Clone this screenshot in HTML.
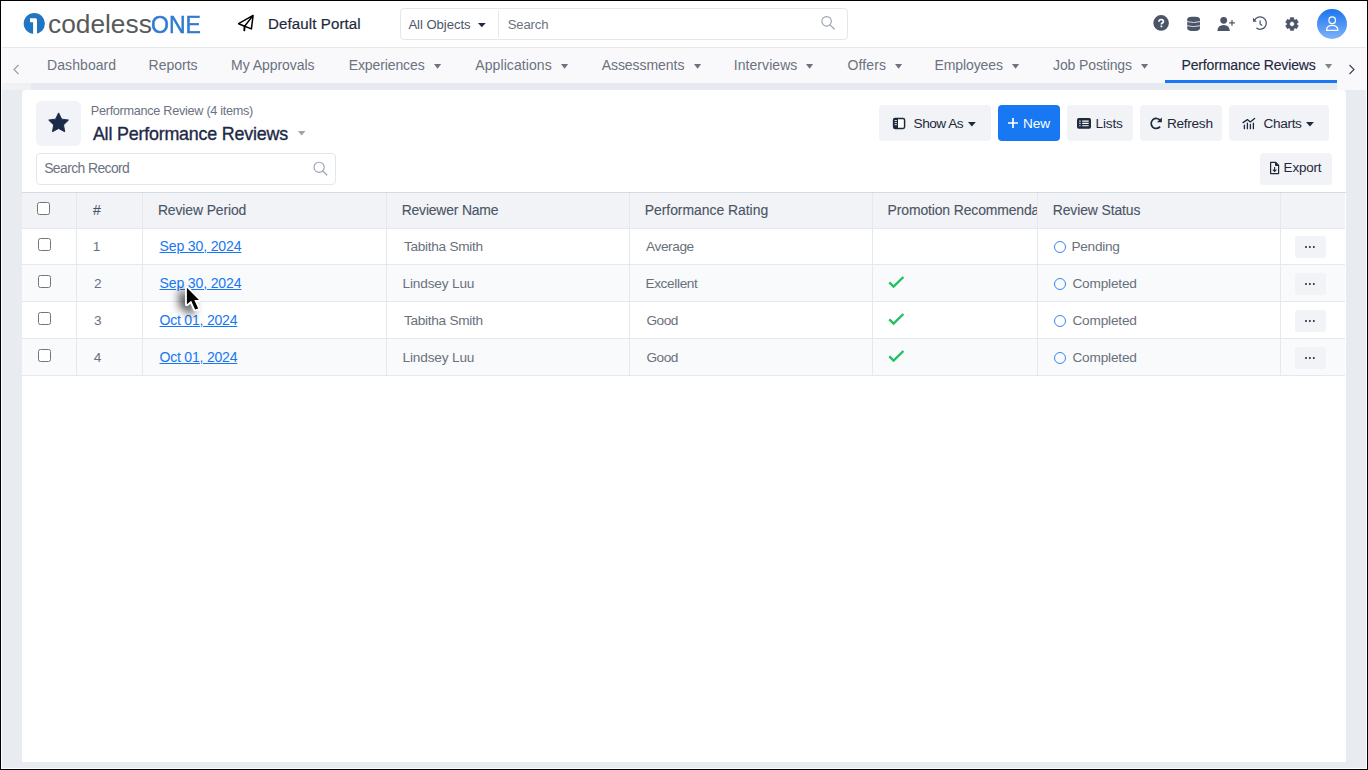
<!DOCTYPE html>
<html><head><meta charset="utf-8">
<style>
*{box-sizing:border-box;margin:0;padding:0}
html,body{width:1368px;height:770px;overflow:hidden;background:#000}
body{font-family:"Liberation Sans",sans-serif;position:relative}
.a{position:absolute;white-space:nowrap;line-height:1}
.r{position:absolute}
.nv{color:#6b7280;font-size:13.7px}
.car{position:absolute;width:0;height:0;border-left:3.6px solid transparent;border-right:3.6px solid transparent;border-top:4.9px solid #6b7280}
.btn{position:absolute;top:105px;height:36px;background:#f1f3f7;border-radius:4px}
.bt{color:#1e293b;font-size:13.1px}
.th{color:#4b5565;font-size:13.5px;-webkit-text-stroke:0.25px #4b5565}
.td{color:#5f6673;font-size:13px}

.cb{position:absolute;width:13px;height:13px;border:1px solid #767676;border-radius:2.5px;background:#fff}
.hl{position:absolute;height:1px;background:#e5e8ec}
.vl{position:absolute;width:1px;background:#e5e8ec}
.more{position:absolute;left:1295px;width:30.5px;height:22px;background:#f1f3f7;border-radius:3px}
.dots{position:absolute;left:10.35px;top:10.35px;width:2.1px;height:2.1px;border-radius:50%;background:#1e293b;box-shadow:3.9px 0 0 #1e293b,7.8px 0 0 #1e293b}
.st{position:absolute;width:12px;height:12px;border:1.3px solid #3b82f6;border-radius:50%}
</style></head>
<body>
<div class="r" style="left:1px;top:1px;width:1366px;height:768px;background:#fff"></div>
<div class="r" style="left:2px;top:1px;width:1364px;height:767px;background:#e8ebef"></div>
<!-- header -->
<div class="r" style="left:2px;top:1px;width:1364px;height:46px;background:#fff"></div>
<div class="r" style="left:2px;top:47px;width:1364px;height:1px;background:#e5e8ed"></div>

<!-- logo -->
<svg class="r" style="left:23px;top:13px" width="22" height="22" viewBox="0 0 22 22">
<circle cx="11.3" cy="10.6" r="10.6" fill="#2175c1"/>
<path d="M7 5.2 H12.5 Q14 5.2 14 6.8 V21.5 H10.1 V9.3 H7 Z" fill="#fff"/>
</svg>
<div class="a" id="logo1" style="left:48px;top:11px;font-size:26.3px;color:#58595b">codeless</div>
<div class="a" id="logo2" style="left:150.8px;top:12.8px;font-size:24.5px;color:#2f7bd0;-webkit-text-stroke:0.5px #2f7bd0;transform:scaleX(0.94);transform-origin:0 0">ONE</div>
<!-- portal -->
<svg class="r" style="left:237px;top:14px" width="19" height="18" viewBox="0 0 19 18">
<path d="M16.1 1.4 L1.6 9.7 L7.6 12.3 L14.4 14.9 Z M7.6 12.3 L16.1 1.4" fill="none" stroke="#000" stroke-width="1.5" stroke-linejoin="round"/>
<path d="M7.6 12 L7.3 16.4" stroke="#000" stroke-width="1.9" stroke-linecap="round"/>
</svg>
<!-- search group -->
<div class="r" style="left:400px;top:8px;width:448px;height:32px;border:1px solid #e3e6eb;border-radius:4px"></div>
<div class="r" style="left:498px;top:11px;width:1px;height:26px;background:#e3e6eb"></div>
<svg class="r" style="left:478.3px;top:23.0px;overflow:visible" width="7.70" height="4.30"><polygon points="0,0 7.70,0 3.85,4.30" fill="#1e293b"/></svg>
<svg class="r" style="left:820px;top:15px" width="16" height="16" viewBox="0 0 16 16">
<circle cx="6.6" cy="6.3" r="4.75" fill="none" stroke="#9ca3af" stroke-width="1.15"/>
<path d="M10 9.8 L14.2 14" stroke="#9ca3af" stroke-width="1.2" stroke-linecap="round"/>
</svg>
<!-- right icons -->
<svg class="r" style="left:1153px;top:15px" width="16" height="16" viewBox="0 0 16 16">
<circle cx="8.1" cy="7.9" r="7.8" fill="#4b5567"/>
<path d="M5.9 6.7 Q6 4.5 8.2 4.5 Q10.4 4.6 10.4 6.4 Q10.4 7.5 9.2 8.1 Q8.4 8.5 8.4 9.5" fill="none" stroke="#fff" stroke-width="1.7"/>
<rect x="7.5" y="10.6" width="1.8" height="1.6" fill="#fff"/>
</svg>
<svg class="r" style="left:1187px;top:16px" width="14" height="16" viewBox="0 0 14 16">
<rect x="0.2" y="0.8" width="12.8" height="14.1" rx="4.5" ry="2.8" fill="#4b5567"/>
<path d="M0 5.6 Q6.6 7.4 13.2 5.6 M0 9.7 Q6.6 11.5 13.2 9.7" fill="none" stroke="#fff" stroke-width="0.8"/>
</svg>
<svg class="r" style="left:1217px;top:16px" width="19" height="16" viewBox="0 0 19 16">
<circle cx="6.7" cy="4.3" r="3.4" fill="#4b5567"/>
<path d="M0.4 15 Q0.6 8.9 6.6 8.9 Q12.6 8.9 12.8 15 Z" fill="#4b5567"/>
<path d="M15 3.9 V9.8 M12.1 6.8 H17.9" stroke="#4b5567" stroke-width="1.2"/>
</svg>
<svg class="r" style="left:1252px;top:15px" width="16" height="17" viewBox="0 0 16 17">
<path d="M2.6 5.2 A6.2 6.2 0 1 1 4.4 13.1" fill="none" stroke="#4b5567" stroke-width="1.3"/>
<path d="M1 2.8 L1 6.7 L4.8 6.7 Z" fill="#4b5567"/>
<path d="M8.1 5.6 V9 L10.2 10.6" fill="none" stroke="#4b5567" stroke-width="1.2"/>
</svg>
<svg class="r" style="left:1285px;top:17px" width="14" height="14" viewBox="0 0 14 14">
<path d="M5.09 2.49 L5.30 0.62 L8.70 0.62 L8.91 2.49 L9.95 3.09 L11.68 2.34 L13.37 5.28 L11.86 6.40 L11.86 7.60 L13.37 8.72 L11.68 11.66 L9.95 10.91 L8.91 11.51 L8.70 13.38 L5.30 13.38 L5.09 11.51 L4.05 10.91 L2.32 11.66 L0.63 8.72 L2.14 7.60 L2.14 6.40 L0.63 5.28 L2.32 2.34 L4.05 3.09 Z M9.4 7 A2.4 2.4 0 1 0 4.6 7 A2.4 2.4 0 1 0 9.4 7 Z" fill="#4b5567" fill-rule="evenodd" stroke="#4b5567" stroke-width="0.5" stroke-linejoin="round"/>
</svg>
<div class="r" style="left:1317px;top:9px;width:30px;height:30px;border-radius:50%;background:linear-gradient(180deg,#1a74f0,#7fb2f8)"></div>
<svg class="r" style="left:1317px;top:9px" width="30" height="30" viewBox="0 0 30 30">
<circle cx="15.2" cy="11.2" r="3.3" fill="none" stroke="#fff" stroke-width="1.25"/>
<path d="M9.5 21.3 Q9.7 16.4 15.2 16.4 Q20.7 16.4 20.9 21.3 Z" fill="none" stroke="#fff" stroke-width="1.25" stroke-linejoin="round"/>
</svg>

<!-- nav -->
<div class="r" style="left:2px;top:48px;width:1364px;height:42px;background:#f9f9fb"></div>
<div class="r" style="left:31px;top:83px;width:1306px;height:7px;background:#e6e9ed"></div>
<div class="r" style="left:2px;top:83px;width:29px;height:7px;background:#f0f1f3"></div>


<svg class="r" style="left:12px;top:63.5px" width="8" height="11" viewBox="0 0 8 11">
<path d="M6.5 1 L2 5.5 L6.5 10" fill="none" stroke="#9aa1ab" stroke-width="1.15"/>
</svg>
<svg class="r" style="left:434.0px;top:63.9px;overflow:visible" width="7.10" height="4.85"><polygon points="0,0 7.10,0 3.55,4.85" fill="#6b7280"/></svg>
<svg class="r" style="left:560.8px;top:63.9px;overflow:visible" width="7.10" height="4.85"><polygon points="0,0 7.10,0 3.55,4.85" fill="#6b7280"/></svg>
<svg class="r" style="left:693.5px;top:63.9px;overflow:visible" width="7.10" height="4.85"><polygon points="0,0 7.10,0 3.55,4.85" fill="#6b7280"/></svg>
<svg class="r" style="left:806.3px;top:63.9px;overflow:visible" width="7.10" height="4.85"><polygon points="0,0 7.10,0 3.55,4.85" fill="#6b7280"/></svg>
<svg class="r" style="left:894.5px;top:63.9px;overflow:visible" width="7.10" height="4.85"><polygon points="0,0 7.10,0 3.55,4.85" fill="#6b7280"/></svg>
<svg class="r" style="left:1012.3px;top:63.9px;overflow:visible" width="7.10" height="4.85"><polygon points="0,0 7.10,0 3.55,4.85" fill="#6b7280"/></svg>
<svg class="r" style="left:1141.3px;top:63.9px;overflow:visible" width="7.10" height="4.85"><polygon points="0,0 7.10,0 3.55,4.85" fill="#6b7280"/></svg>
<svg class="r" style="left:1324.7px;top:63.9px;overflow:visible" width="7.10" height="4.85"><polygon points="0,0 7.10,0 3.55,4.85" fill="#7b8290"/></svg>
<div class="r" style="left:1165px;top:80px;width:172px;height:3px;background:#1877f2"></div>
<svg class="r" style="left:1348px;top:63.6px" width="8" height="11" viewBox="0 0 8 11">
<path d="M1.5 1 L6 5.5 L1.5 10" fill="none" stroke="#3d4656" stroke-width="1.15"/>
</svg>

<!-- panel -->
<div class="r" style="left:22px;top:90px;width:1324px;height:672px;background:#fff;border-radius:4px 4px 0 0"></div>


<!-- title area -->
<div class="r" style="left:36px;top:101px;width:45px;height:45px;background:#f1f3f8;border-radius:6px"></div>
<svg class="r" style="left:44.5px;top:111px" width="26" height="24" viewBox="-13 -12 26 24">
<polygon points="0.00,-10.50 3.06,-4.21 9.99,-3.24 4.95,1.61 6.17,8.49 0.00,5.20 -6.17,8.49 -4.95,1.61 -9.99,-3.24 -3.06,-4.21" fill="#1c2a4a" stroke="#1c2a4a" stroke-width="1" stroke-linejoin="round" transform="translate(0.6,0.3) scale(0.99)"/>
</svg>
<svg class="r" style="left:297.6px;top:131.0px;overflow:visible" width="7.40" height="4.60"><polygon points="0,0 7.40,0 3.70,4.60" fill="#9ca3af"/></svg>
<div class="r" style="left:36px;top:153px;width:300px;height:32px;border:1px solid #e3e6eb;border-radius:4px"></div>
<svg class="r" style="left:312px;top:161px" width="16" height="16" viewBox="0 0 16 16">
<circle cx="7.1" cy="6.3" r="5.1" fill="none" stroke="#9ca3af" stroke-width="1.15"/>
<path d="M10.8 10 L14.8 14" stroke="#9ca3af" stroke-width="1.2" stroke-linecap="round"/>
</svg>
<!-- buttons -->
<div class="btn" style="left:879px;width:112px"></div>
<svg class="r" style="left:892px;top:117px" width="14" height="13" viewBox="0 0 14 13">
<rect x="1.6" y="1.6" width="11" height="9.8" rx="1.6" fill="#fff" stroke="#1e293b" stroke-width="1.5"/>
<rect x="1.6" y="1.6" width="4.4" height="9.8" fill="#1e293b"/>
<path d="M2.6 3.5 H4.9 M2.6 5.6 H4.9 M2.6 7.7 H4.9" stroke="#fff" stroke-width="0.85"/>
</svg>
<svg class="r" style="left:968.3px;top:122.0px;overflow:visible" width="7.80" height="4.40"><polygon points="0,0 7.80,0 3.90,4.40" fill="#1e293b"/></svg>
<div class="btn" style="left:998px;width:62px;background:#1877f2"></div>
<svg class="r" style="left:1007px;top:117px" width="12" height="12" viewBox="0 0 12 12">
<path d="M6 1 V11 M1 6 H11" stroke="#fff" stroke-width="1.7"/>
</svg>
<div class="btn" style="left:1067px;width:66px"></div>
<svg class="r" style="left:1077px;top:118px" width="15" height="11" viewBox="0 0 15 11">
<rect x="0" y="0" width="14" height="10.7" rx="1.8" fill="#1e293b"/>
<path d="M2.3 3.1 H3.6 M2.3 5.4 H3.6 M2.3 7.7 H3.6 M5.2 3.1 H11.7 M5.2 5.4 H11.7 M5.2 7.7 H11.7" stroke="#fff" stroke-width="1.1"/>
</svg>
<div class="btn" style="left:1140px;width:82px"></div>
<svg class="r" style="left:1150px;top:117px" width="13" height="13" viewBox="0 0 13 13">
<path d="M10.3 3.6 A5 5 0 1 0 10.1 9.6" fill="none" stroke="#1e293b" stroke-width="1.7"/>
<path d="M6.9 5.3 L11.9 5.3 L11.9 0.5 Z" fill="#1e293b"/>
</svg>
<div class="btn" style="left:1229px;width:100px"></div>
<svg class="r" style="left:1242px;top:117px" width="14" height="13" viewBox="0 0 14 13">
<path d="M1 5.6 L5.4 2.6 L8.3 4.9 L12.6 1.4" fill="none" stroke="#1e293b" stroke-width="1.3" stroke-linecap="round" stroke-linejoin="round"/>
<path d="M2.4 8.2 V11.7 M5.4 6.1 V11.7 M8.4 7.4 V11.7 M11.4 6.1 V11.7" stroke="#1e293b" stroke-width="1.3" stroke-linecap="round"/>
</svg>
<svg class="r" style="left:1305.9px;top:121.7px;overflow:visible" width="7.90" height="4.60"><polygon points="0,0 7.90,0 3.95,4.60" fill="#1e293b"/></svg>
<div class="btn" style="left:1260px;top:153px;width:72px;height:32px"></div>
<svg class="r" style="left:1269px;top:161px" width="11" height="14" viewBox="0 0 11 14">
<path d="M1.6 1.4 H6.8 L9.6 4.2 V12.6 H1.6 Z" fill="none" stroke="#1e293b" stroke-width="1.2" stroke-linejoin="round"/>
<path d="M6.5 1.4 V4.5 H9.6" fill="#1e293b" stroke="#1e293b" stroke-width="1"/>
<path d="M5.6 6 V10.3 M3.8 8.6 L5.6 10.4 L7.4 8.6" fill="none" stroke="#1e293b" stroke-width="1.1"/>
</svg>

<!-- table -->
<div class="r" style="left:22px;top:192px;width:1324px;height:1px;background:#d5dae1"></div>
<div class="r" style="left:22px;top:193px;width:1323px;height:35px;background:#f1f3f7"></div>
<div class="hl" style="left:22px;top:228px;width:1323px"></div>
<div class="r" style="left:22px;top:229px;width:1323px;height:35px;background:#fff"></div>
<div class="hl" style="left:22px;top:264px;width:1323px"></div>
<div class="r" style="left:22px;top:265px;width:1323px;height:36px;background:#f9fafb"></div>
<div class="hl" style="left:22px;top:301px;width:1323px"></div>
<div class="r" style="left:22px;top:302px;width:1323px;height:36px;background:#fff"></div>
<div class="hl" style="left:22px;top:338px;width:1323px"></div>
<div class="r" style="left:22px;top:339px;width:1323px;height:36px;background:#f9fafb"></div>
<div class="hl" style="left:22px;top:375px;width:1323px"></div>
<div class="vl" style="left:76px;top:193px;height:183px"></div>
<div class="vl" style="left:142px;top:193px;height:183px"></div>
<div class="vl" style="left:386px;top:193px;height:183px"></div>
<div class="vl" style="left:629px;top:193px;height:183px"></div>
<div class="vl" style="left:872px;top:193px;height:183px"></div>
<div class="vl" style="left:1037px;top:193px;height:183px"></div>
<div class="vl" style="left:1280px;top:193px;height:183px"></div>
<div class="cb" style="left:37px;top:202px"></div>
<div class="cb" style="left:38px;top:238px"></div>
<div class="st" style="left:1054px;top:241px"></div>
<div class="more" style="top:236px"><div class="dots"></div></div>
<div class="cb" style="left:38px;top:275px"></div>
<svg class="r" style="left:887px;top:274.5px" width="19" height="14" viewBox="0 0 19 14"><path d="M2.3 7.4 L6.6 11.6 L16.4 2" fill="none" stroke="#22c063" stroke-width="2.4"/></svg>
<div class="st" style="left:1054px;top:278px"></div>
<div class="more" style="top:273px"><div class="dots"></div></div>
<div class="cb" style="left:38px;top:312px"></div>
<svg class="r" style="left:887px;top:311.5px" width="19" height="14" viewBox="0 0 19 14"><path d="M2.3 7.4 L6.6 11.6 L16.4 2" fill="none" stroke="#22c063" stroke-width="2.4"/></svg>
<div class="st" style="left:1054px;top:315px"></div>
<div class="more" style="top:310px"><div class="dots"></div></div>
<div class="cb" style="left:38px;top:349px"></div>
<svg class="r" style="left:887px;top:348.5px" width="19" height="14" viewBox="0 0 19 14"><path d="M2.3 7.4 L6.6 11.6 L16.4 2" fill="none" stroke="#22c063" stroke-width="2.4"/></svg>
<div class="st" style="left:1054px;top:352px"></div>
<div class="more" style="top:347px"><div class="dots"></div></div>
<div class="a" style="left:268px;top:16.24px;font-size:15.07px;letter-spacing:0.106px;color:#1e293b;-webkit-text-stroke:0.2px #1e293b;">Default Portal</div>
<div class="a" style="left:408.4px;top:17.59px;font-size:13.12px;letter-spacing:-0.05px;color:#4a5568;">All Objects</div>
<div class="a" style="left:507.8px;top:17.59px;font-size:13.12px;letter-spacing:-0.169px;color:#6b7280;">Search</div>
<div class="a" style="left:47.1px;top:58.03px;font-size:14.02px;letter-spacing:0.054px;color:#6b7280;">Dashboard</div>
<div class="a" style="left:148.6px;top:58.03px;font-size:14.02px;letter-spacing:-0.028px;color:#6b7280;">Reports</div>
<div class="a" style="left:231px;top:58.03px;font-size:14.02px;letter-spacing:-0.045px;color:#6b7280;">My Approvals</div>
<div class="a" style="left:348.7px;top:58.03px;font-size:14.02px;letter-spacing:-0.112px;color:#6b7280;">Experiences</div>
<div class="a" style="left:475.3px;top:58.03px;font-size:14.02px;letter-spacing:0.076px;color:#6b7280;">Applications</div>
<div class="a" style="left:601.7px;top:58.03px;font-size:14.02px;letter-spacing:-0.063px;color:#6b7280;">Assessments</div>
<div class="a" style="left:733.8px;top:58.03px;font-size:14.02px;letter-spacing:0.046px;color:#6b7280;">Interviews</div>
<div class="a" style="left:847.6px;top:58.03px;font-size:14.02px;letter-spacing:0.1px;color:#6b7280;">Offers</div>
<div class="a" style="left:934.5px;top:58.03px;font-size:14.02px;letter-spacing:-0.103px;color:#6b7280;">Employees</div>
<div class="a" style="left:1053px;top:58.03px;font-size:14.02px;letter-spacing:-0.113px;color:#6b7280;">Job Postings</div>
<div class="a" style="left:1181.5px;top:58.03px;font-size:14.02px;letter-spacing:-0.155px;color:#1e293b;-webkit-text-stroke:0.15px #1e293b;">Performance Reviews</div>
<div class="a" style="left:90.8px;top:104.75px;font-size:12.7px;letter-spacing:-0.3px;color:#6b7280;">Performance Review (4 items)</div>
<div class="a" style="left:92.9px;top:125.78px;font-size:17.86px;letter-spacing:-0.194px;color:#1e2a46;-webkit-text-stroke:0.35px #1e2a46;">All Performance Reviews</div>
<div class="a" style="left:44.2px;top:161.69px;font-size:13.95px;letter-spacing:-0.609px;color:#6b7280;">Search Record</div>
<div class="a" style="left:913.6px;top:117.02px;font-size:13.67px;letter-spacing:-0.511px;color:#1e293b;">Show As</div>
<div class="a" style="left:1095.5px;top:117.02px;font-size:13.67px;letter-spacing:-0.163px;color:#1e293b;">Lists</div>
<div class="a" style="left:1166.9px;top:117.02px;font-size:13.67px;letter-spacing:-0.287px;color:#1e293b;">Refresh</div>
<div class="a" style="left:1263.6px;top:117.02px;font-size:13.67px;letter-spacing:-0.379px;color:#1e293b;">Charts</div>
<div class="a" style="left:1022.9px;top:117.02px;font-size:13.67px;letter-spacing:-0.029px;color:#fff;">New</div>
<div class="a" style="left:1283.6px;top:161.26px;font-size:13.4px;letter-spacing:-0.148px;color:#1e293b;">Export</div>
<div class="a" style="left:92.9px;top:203.99px;font-size:13.95px;letter-spacing:2.0px;color:#4b5565;-webkit-text-stroke:0.12px #4b5565;">#</div>
<div class="a" style="left:157.9px;top:203.99px;font-size:13.95px;letter-spacing:-0.117px;color:#4b5565;-webkit-text-stroke:0.12px #4b5565;">Review Period</div>
<div class="a" style="left:401.7px;top:203.99px;font-size:13.95px;letter-spacing:-0.191px;color:#4b5565;-webkit-text-stroke:0.12px #4b5565;">Reviewer Name</div>
<div class="a" style="left:644.7px;top:203.99px;font-size:13.95px;letter-spacing:-0.029px;color:#4b5565;-webkit-text-stroke:0.12px #4b5565;">Performance Rating</div>
<div class="a" style="left:1052.8px;top:203.99px;font-size:13.95px;letter-spacing:-0.126px;color:#4b5565;-webkit-text-stroke:0.12px #4b5565;">Review Status</div>
<div class="a" style="left:92.7px;top:240.04px;font-size:13.65px;letter-spacing:-3.6px;color:#6a717c;">1</div>
<div class="a" style="left:159.5px;top:238.67px;font-size:14.09px;letter-spacing:-0.157px;color:#1877f2;text-decoration:underline;text-decoration-thickness:1px;text-underline-offset:0.6px;">Sep 30, 2024</div>
<div class="a" style="left:404px;top:240.04px;font-size:13.65px;letter-spacing:-0.296px;color:#6a717c;">Tabitha Smith</div>
<div class="a" style="left:646px;top:240.04px;font-size:13.65px;letter-spacing:-0.396px;color:#6a717c;">Average</div>
<div class="a" style="left:1071.4px;top:240.04px;font-size:13.65px;letter-spacing:-0.262px;color:#6a717c;">Pending</div>
<div class="a" style="left:94px;top:277.04px;font-size:13.65px;letter-spacing:1.2px;color:#6a717c;">2</div>
<div class="a" style="left:159.5px;top:275.67px;font-size:14.09px;letter-spacing:-0.157px;color:#1877f2;text-decoration:underline;text-decoration-thickness:1px;text-underline-offset:0.6px;">Sep 30, 2024</div>
<div class="a" style="left:402.6px;top:277.04px;font-size:13.65px;letter-spacing:-0.178px;color:#6a717c;">Lindsey Luu</div>
<div class="a" style="left:645.4px;top:277.04px;font-size:13.65px;letter-spacing:-0.357px;color:#6a717c;">Excellent</div>
<div class="a" style="left:1072.4px;top:277.04px;font-size:13.65px;letter-spacing:-0.185px;color:#6a717c;">Completed</div>
<div class="a" style="left:94px;top:314.04px;font-size:13.65px;letter-spacing:1.2px;color:#6a717c;">3</div>
<div class="a" style="left:159.5px;top:312.67px;font-size:14.09px;letter-spacing:-0.235px;color:#1877f2;text-decoration:underline;text-decoration-thickness:1px;text-underline-offset:0.6px;">Oct 01, 2024</div>
<div class="a" style="left:404px;top:314.04px;font-size:13.65px;letter-spacing:-0.296px;color:#6a717c;">Tabitha Smith</div>
<div class="a" style="left:646.4px;top:314.04px;font-size:13.65px;letter-spacing:-0.461px;color:#6a717c;">Good</div>
<div class="a" style="left:1072.4px;top:314.04px;font-size:13.65px;letter-spacing:-0.185px;color:#6a717c;">Completed</div>
<div class="a" style="left:93.8px;top:351.04px;font-size:13.65px;letter-spacing:-0.8px;color:#6a717c;">4</div>
<div class="a" style="left:159.5px;top:349.67px;font-size:14.09px;letter-spacing:-0.235px;color:#1877f2;text-decoration:underline;text-decoration-thickness:1px;text-underline-offset:0.6px;">Oct 01, 2024</div>
<div class="a" style="left:402.6px;top:351.04px;font-size:13.65px;letter-spacing:-0.178px;color:#6a717c;">Lindsey Luu</div>
<div class="a" style="left:646.4px;top:351.04px;font-size:13.65px;letter-spacing:-0.461px;color:#6a717c;">Good</div>
<div class="a" style="left:1072.4px;top:351.04px;font-size:13.65px;letter-spacing:-0.185px;color:#6a717c;">Completed</div>
<div class="r" style="left:873px;top:193px;width:164px;height:35px;overflow:hidden"><div class="a" style="left:14.600000000000023px;top:10.990000000000009px;font-size:13.95px;letter-spacing:-0.126px;color:#4b5565;-webkit-text-stroke:0.12px #4b5565;">Promotion Recommendation</div></div>
<!-- cursor -->
<svg class="r" style="left:161px;top:272px" width="50" height="56" viewBox="0 0 50 56">
<defs><filter id="sh" filterUnits="userSpaceOnUse" x="-30" y="-20" width="60" height="60"><feGaussianBlur stdDeviation="4.5"/></filter></defs>
<g transform="translate(25.9,15.8)">
<polygon transform="translate(-5.5,3.5)" points="0,0 0,16.5 4.3,13 8.2,21.6 11.3,20.8 7.4,12.2 12.1,12.2" fill="rgba(0,0,0,0.5)" stroke="rgba(0,0,0,0.5)" stroke-width="5" stroke-linejoin="round" filter="url(#sh)"/>
<polygon points="0,0 0,16.5 4.3,13 8.2,21.6 11.3,20.8 7.4,12.2 12.1,12.2" fill="#fff" stroke="#fff" stroke-width="3.8" stroke-linejoin="round"/>
<polygon points="0,0 0,16.5 4.3,13 8.2,21.6 11.3,20.8 7.4,12.2 12.1,12.2" fill="#000"/>
</g>
</svg>

</body></html>
